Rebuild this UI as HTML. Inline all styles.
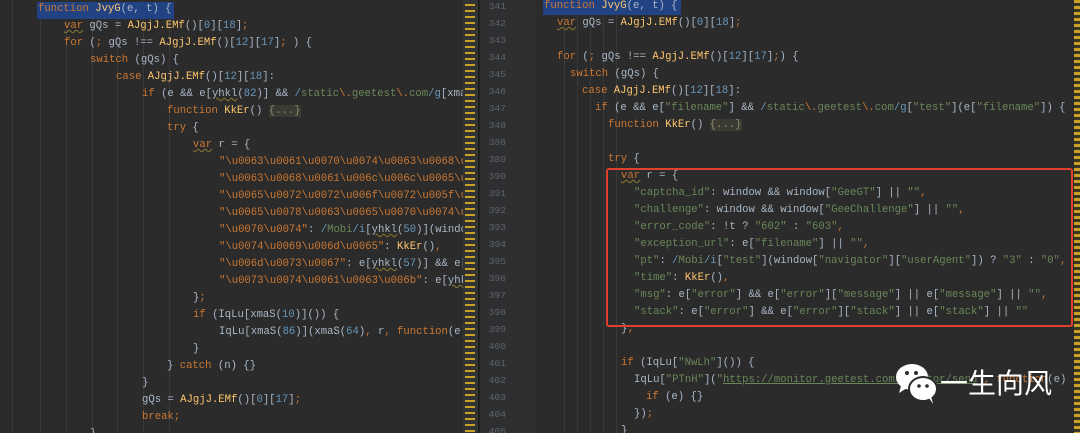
<!DOCTYPE html>
<html><head><meta charset="utf-8"><style>
body{margin:0;width:1080px;height:433px;overflow:hidden;background:#2b2b2b;font-family:"Liberation Mono",monospace;}
.p{position:absolute;top:0;height:433px;overflow:hidden;background:#2b2b2b}
.l{position:absolute;white-space:pre;color:#a9b7c6;line-height:17px;font-size:10.6px}
.k{color:#cc7832}.f{color:#ffc66d}.n{color:#6897bb}.s{color:#6a8759}.u{text-decoration:underline wavy #8a7a30;text-decoration-thickness:1px}
.ln{position:absolute;left:2px;width:24px;text-align:right;color:#606366;font-size:9.6px;line-height:17px;white-space:pre}
.g{position:absolute;top:0;bottom:0;width:1px;background:#393939}
</style></head><body>
<div class="p L" style="left:0;width:463px">
<div class="g" style="left:12px"></div><div class="g" style="left:40px"></div><div class="g" style="left:66px"></div><div class="g" style="left:92px"></div><div class="g" style="left:117px"></div><div class="g" style="left:143px"></div><div class="g" style="left:169px"></div>
<div style="position:absolute;left:37px;top:2px;width:137px;height:17px;background:#214283"></div>
<div class="l" style="left:38px;top:1px"><span class="k">function </span><span class="f">JvyG</span>(e, t) {</div>
<div class="l" style="left:64px;top:18px"><span class="k u">var</span> gQs = <span class="f">AJgjJ.EMf</span>()[<span class="n">0</span>][<span class="n">18</span>]<span class="k">;</span></div>
<div class="l" style="left:64px;top:35px"><span class="k">for</span> (<span class="k">;</span> gQs !== <span class="f">AJgjJ.EMf</span>()[<span class="n">12</span>][<span class="n">17</span>]<span class="k">;</span> ) {</div>
<div class="l" style="left:90px;top:52px"><span class="k">switch</span> (gQs) {</div>
<div class="l" style="left:116px;top:69px"><span class="k">case </span><span class="f">AJgjJ.EMf</span>()[<span class="n">12</span>][<span class="n">18</span>]:</div>
<div class="l" style="left:142px;top:86px"><span class="k">if</span> (e &amp;&amp; e[<span class="u">yhkl</span>(<span class="n">82</span>)] &amp;&amp; <span class="n">/</span><span class="s">static</span><span class="k">\.</span><span class="s">geetest</span><span class="k">\.</span><span class="s">com</span><span class="n">/g</span>[xmaS(</div>
<div class="l" style="left:167px;top:103px"><span class="k">function </span><span class="f">KkEr</span>() <span style="background:#3b3b33;color:#8a8a70">{...}</span></div>
<div class="l" style="left:167px;top:120px"><span class="k">try</span> {</div>
<div class="l" style="left:193px;top:137px"><span class="k u">var</span> r = {</div>
<div class="l k" style="left:219px;top:154px">"\u0063\u0061\u0070\u0074\u0063\u0068\u0061</div>
<div class="l k" style="left:219px;top:171px">"\u0063\u0068\u0061\u006c\u006c\u0065\u006e</div>
<div class="l k" style="left:219px;top:188px">"\u0065\u0072\u0072\u006f\u0072\u005f\u0063</div>
<div class="l k" style="left:219px;top:205px">"\u0065\u0078\u0063\u0065\u0070\u0074\u0069</div>
<div class="l" style="left:219px;top:222px"><span class="k">"\u0070\u0074"</span>: <span class="n">/</span><span class="s">Mobi</span><span class="n">/i</span>[<span class="u">yhkl</span>(<span class="n">50</span>)](window</div>
<div class="l" style="left:219px;top:239px"><span class="k">"\u0074\u0069\u006d\u0065"</span>: <span class="f">KkEr</span>()<span class="k">,</span></div>
<div class="l" style="left:219px;top:256px"><span class="k">"\u006d\u0073\u0067"</span>: e[<span class="u">yhkl</span>(<span class="n">57</span>)] &amp;&amp; e[yh</div>
<div class="l" style="left:219px;top:273px"><span class="k">"\u0073\u0074\u0061\u0063\u006b"</span>: e[<span class="u">yhkl</span>(</div>
<div class="l" style="left:193px;top:290px">}<span class="k">;</span></div>
<div class="l" style="left:193px;top:307px"><span class="k">if</span> (IqLu[xmaS(<span class="n">10</span>)]()) {</div>
<div class="l" style="left:219px;top:324px">IqLu[xmaS(<span class="n">86</span>)](xmaS(<span class="n">64</span>)<span class="k">,</span> r<span class="k">, function</span>(e)</div>
<div class="l" style="left:193px;top:341px">}</div>
<div class="l" style="left:167px;top:358px">} <span class="k">catch</span> (n) {}</div>
<div class="l" style="left:142px;top:375px">}</div>
<div class="l" style="left:142px;top:392px">gQs = <span class="f">AJgjJ.EMf</span>()[<span class="n">0</span>][<span class="n">17</span>]<span class="k">;</span></div>
<div class="l" style="left:142px;top:409px"><span class="k">break;</span></div>
<div class="l" style="left:90px;top:426px">}</div>
</div>
<div style="position:absolute;left:463px;top:0;width:15px;height:433px;background:#313335;background-image:repeating-linear-gradient(to bottom,transparent 0 4px,#c9a227 4px 6px);background-size:10px 433px;background-repeat:no-repeat;background-position:2px 0"></div>
<div style="position:absolute;left:478px;top:0;width:2px;height:433px;background:#1e1e1e"></div>
<div class="p R" style="left:480px;width:594px;background:#2b2b2b">
<div style="position:absolute;left:0;top:0;width:56px;height:433px;background:#2e2f30"></div>
<div class="ln" style="top:-2px">341
342
343
344
345
346
347
348
388
389
390
391
392
393
394
395
396
397
398
399
400
401
402
403
404
405</div>
<div class="g" style="left:84px"></div><div class="g" style="left:97px"></div><div class="g" style="left:110px"></div><div class="g" style="left:123px"></div><div class="g" style="left:136px"></div>
<div style="position:absolute;left:63px;top:0;width:138px;height:15px;background:#214283"></div>
<div class="l" style="left:64px;top:-2px"><span class="k">function </span><span class="f">JvyG</span>(e, t) {</div>
<div class="l" style="left:77px;top:15px"><span class="k u">var</span> gQs = <span class="f">AJgjJ.EMf</span>()[<span class="n">0</span>][<span class="n">18</span>]<span class="k">;</span></div>
<div class="l" style="left:77px;top:49px"><span class="k">for</span> (<span class="k">;</span> gQs !== <span class="f">AJgjJ.EMf</span>()[<span class="n">12</span>][<span class="n">17</span>]<span class="k">;</span>) {</div>
<div class="l" style="left:90px;top:66px"><span class="k">switch</span> (gQs) {</div>
<div class="l" style="left:102px;top:83px"><span class="k">case </span><span class="f">AJgjJ.EMf</span>()[<span class="n">12</span>][<span class="n">18</span>]:</div>
<div class="l" style="left:115px;top:100px"><span class="k">if</span> (e &amp;&amp; e[<span class="s">"filename"</span>] &amp;&amp; <span class="n">/</span><span class="s">static</span><span class="k">\.</span><span class="s">geetest</span><span class="k">\.</span><span class="s">com</span><span class="n">/g</span>[<span class="s">"test"</span>](e[<span class="s">"filename"</span>]) {</div>
<div class="l" style="left:128px;top:117px"><span class="k">function </span><span class="f">KkEr</span>() <span style="background:#3b3b33;color:#8a8a70">{...}</span></div>
<div class="l" style="left:128px;top:151px"><span class="k">try</span> {</div>
<div class="l" style="left:141px;top:168px"><span class="k u">var</span> r = {</div>
<div class="l" style="left:154px;top:185px"><span class="s">"captcha_id"</span>: window &amp;&amp; window[<span class="s">"GeeGT"</span>] || <span class="s">""</span><span class="k">,</span></div>
<div class="l" style="left:154px;top:202px"><span class="s">"challenge"</span>: window &amp;&amp; window[<span class="s">"GeeChallenge"</span>] || <span class="s">""</span><span class="k">,</span></div>
<div class="l" style="left:154px;top:219px"><span class="s">"error_code"</span>: !t ? <span class="s">"602"</span> : <span class="s">"603"</span><span class="k">,</span></div>
<div class="l" style="left:154px;top:236px"><span class="s">"exception_url"</span>: e[<span class="s">"filename"</span>] || <span class="s">""</span><span class="k">,</span></div>
<div class="l" style="left:154px;top:253px"><span class="s">"pt"</span>: <span class="n">/</span><span class="s">Mobi</span><span class="n">/i</span>[<span class="s">"test"</span>](window[<span class="s">"navigator"</span>][<span class="s">"userAgent"</span>]) ? <span class="s">"3"</span> : <span class="s">"0"</span><span class="k">,</span></div>
<div class="l" style="left:154px;top:270px"><span class="s">"time"</span>: <span class="f">KkEr</span>()<span class="k">,</span></div>
<div class="l" style="left:154px;top:287px"><span class="s">"msg"</span>: e[<span class="s">"error"</span>] &amp;&amp; e[<span class="s">"error"</span>][<span class="s">"message"</span>] || e[<span class="s">"message"</span>] || <span class="s">""</span><span class="k">,</span></div>
<div class="l" style="left:154px;top:304px"><span class="s">"stack"</span>: e[<span class="s">"error"</span>] &amp;&amp; e[<span class="s">"error"</span>][<span class="s">"stack"</span>] || e[<span class="s">"stack"</span>] || <span class="s">""</span></div>
<div class="l" style="left:141px;top:321px">}<span class="k">;</span></div>
<div class="l" style="left:141px;top:355px"><span class="k">if</span> (IqLu[<span class="s">"NwLh"</span>]()) {</div>
<div class="l" style="left:154px;top:372px">IqLu[<span class="s">"PTnH"</span>](<span class="s">"<u>https://monitor.geetest.com/monitor/send</u>"</span><span class="k">, function</span>(e) {</div>
<div class="l" style="left:166px;top:389px"><span class="k">if</span> (e) {}</div>
<div class="l" style="left:154px;top:406px">})<span class="k">;</span></div>
<div class="l" style="left:141px;top:423px">}</div>
<div style="position:absolute;left:126px;top:168px;width:463px;height:155px;border:2px solid #e0412c;border-radius:3px"></div>
</div>
<div style="position:absolute;left:1074px;top:0;width:6px;height:433px;background:#3a3520;background-image:repeating-linear-gradient(to bottom,#c9a227 0 3px,transparent 3px 6px)"></div>
<svg style="position:absolute;left:893px;top:360px" width="50" height="50" viewBox="0 0 50 50">
<ellipse cx="19" cy="17" rx="16" ry="13" fill="#fff"/><path d="M8 26 L6 33 L14 28Z" fill="#fff"/>
<ellipse cx="30" cy="29" rx="14" ry="12" fill="#fff" stroke="#2b2b2b" stroke-width="2"/><path d="M36 38 L40 44 L38 36Z" fill="#fff"/>
<circle cx="14" cy="13" r="2" fill="#2b2b2b"/><circle cx="23" cy="13" r="2" fill="#2b2b2b"/>
<circle cx="26" cy="26" r="1.8" fill="#2b2b2b"/><circle cx="34" cy="26" r="1.8" fill="#2b2b2b"/>
</svg>
<div style="position:absolute;left:940px;top:364px;color:#fff;font-size:28px;font-family:'Noto Sans CJK SC',sans-serif;line-height:36px">一生向风</div>
</body></html>
